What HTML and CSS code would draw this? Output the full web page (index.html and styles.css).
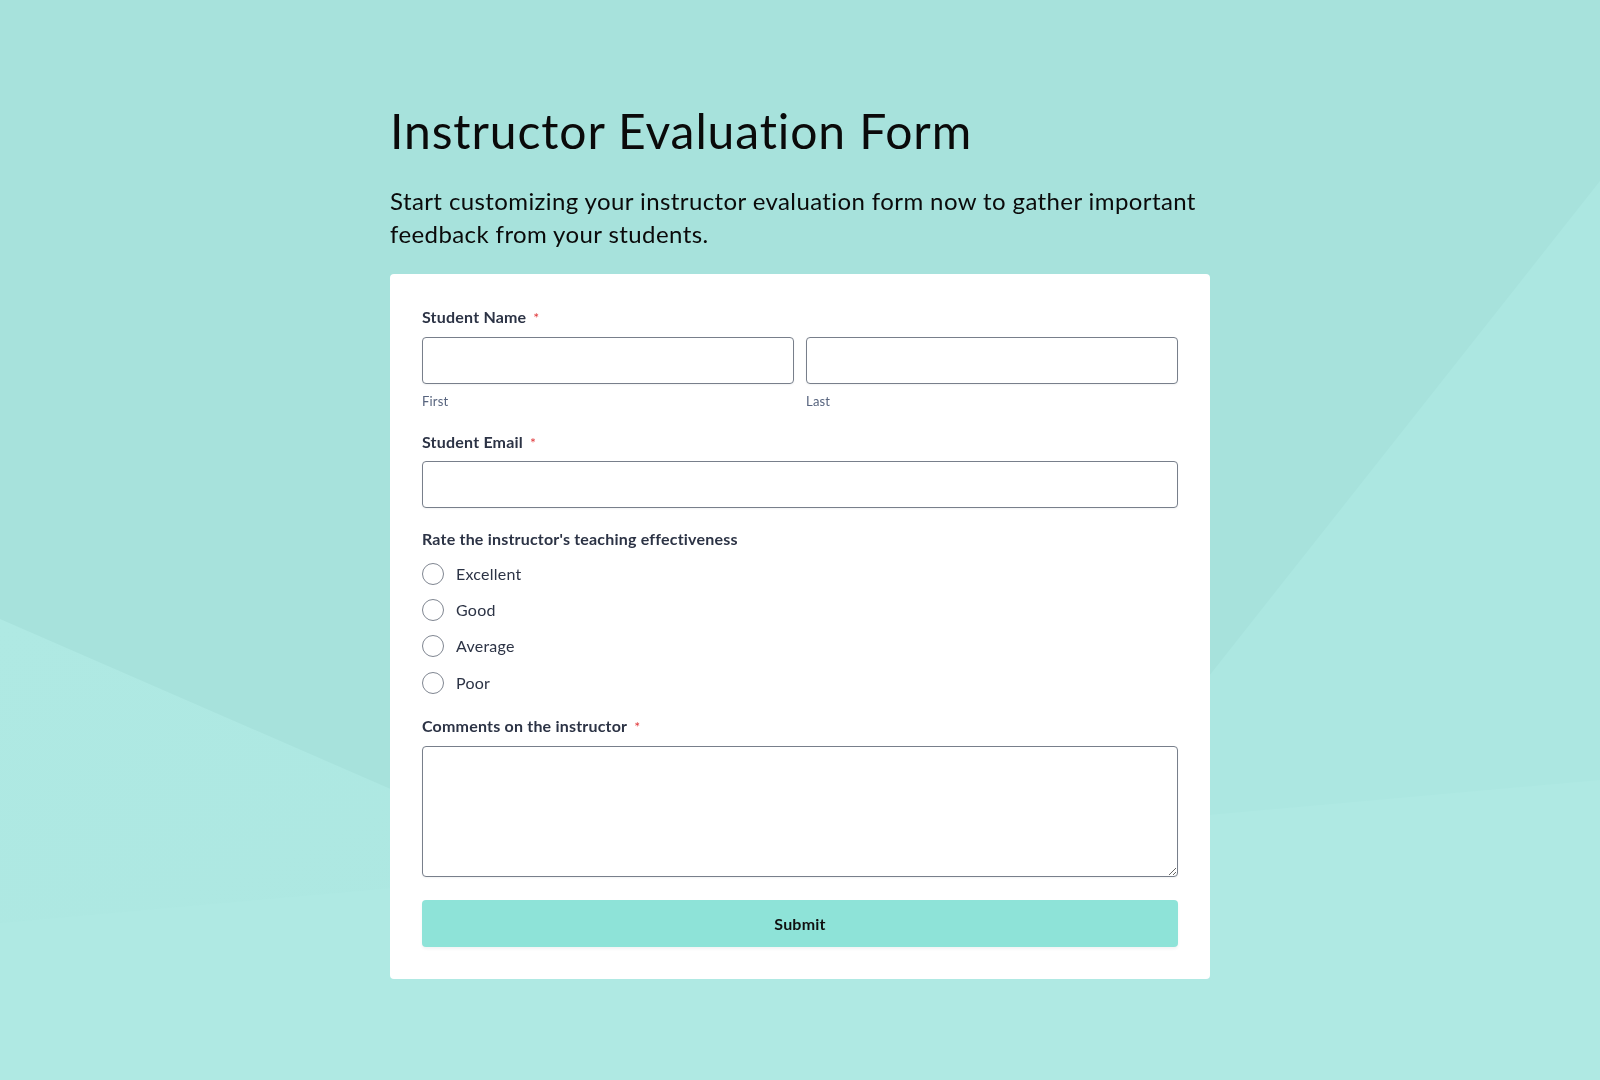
FILE: index.html
```html
<!DOCTYPE html>
<html lang="en">
<head>
<meta charset="utf-8">
<title>Instructor Evaluation Form</title>
<link rel="stylesheet" href="styles.css">
</head>
<body>
<div class="bg" aria-hidden="true">
  <svg class="bg-svg" viewBox="0 0 1600 1080" preserveAspectRatio="none" xmlns="http://www.w3.org/2000/svg">
    <defs>
      <linearGradient id="gl" x1="0" y1="0" x2="1" y2="1">
        <stop offset="0" stop-color="#afe9e3"/>
        <stop offset="1" stop-color="#abe6e0"/>
      </linearGradient>
    </defs>
    <rect x="0" y="0" width="1600" height="1080" fill="#a7e2dc"/>
    <polygon points="0,619 1220,1150 0,1150" fill="url(#gl)"/>
    <polygon points="1600,181 1600,1080 890,1080" fill="#ace7e1"/>
    <polygon points="0,923 1600,780 1600,1080 0,1080" fill="#afe9e3"/>
  </svg>
</div>

<main class="page">
  <h1 class="title">Instructor Evaluation Form</h1>
  <p class="subtitle">Start customizing your instructor evaluation form now to gather important feedback from your students.</p>

  <form class="card">
    <div class="field">
      <div class="label">Student Name<span class="req">*</span></div>
      <div class="name-row">
        <div class="name-col">
          <input class="input" type="text">
          <span class="sublabel">First</span>
        </div>
        <div class="name-col">
          <input class="input" type="text">
          <span class="sublabel">Last</span>
        </div>
      </div>
    </div>

    <div class="field field-email">
      <div class="label label-tight">Student Email<span class="req">*</span></div>
      <input class="input" type="email">
    </div>

    <div class="field field-rate">
      <div class="label label-radio">Rate the instructor's teaching effectiveness</div>
      <div class="radios">
        <label class="radio-row"><input class="radio" type="radio" name="rate"><span>Excellent</span></label>
        <label class="radio-row"><input class="radio" type="radio" name="rate"><span>Good</span></label>
        <label class="radio-row"><input class="radio" type="radio" name="rate"><span>Average</span></label>
        <label class="radio-row"><input class="radio" type="radio" name="rate"><span>Poor</span></label>
      </div>
    </div>

    <div class="field field-comments">
      <div class="label">Comments on the instructor<span class="req">*</span></div>
      <textarea class="textarea"></textarea>
    </div>

    <button class="submit" type="button">Submit</button>
  </form>
</main>
</body>
</html>
```

FILE: styles.css
```css
html, body {
  margin: 0;
  padding: 0;
}

body {
  font-family: Lato, "Noto Sans", sans-serif;
  background: #a7e2dc;
  color: #2c3345;
  min-height: 1080px;
}

.bg {
  position: fixed;
  inset: 0;
  z-index: -1;
}

.bg-svg {
  display: block;
  width: 100%;
  height: 100%;
}

.page {
  width: 820px;
  margin: 0 auto;
  padding-top: 102px;
  padding-bottom: 40px;
}

.title {
  margin: 0;
  font-size: 48px;
  font-weight: 400;
  line-height: 58px;
  letter-spacing: 0.9px;
  color: #0a0a0a;
}

.subtitle {
  margin: 25px 0 0;
  font-size: 24px;
  font-weight: 400;
  line-height: 32.5px;
  letter-spacing: 0.4px;
  color: #0a0a0a;
}

.card {
  margin-top: 24px;
  background: #ffffff;
  border-radius: 4px;
  padding: 33px 32px 32px;
  display: flex;
  flex-direction: column;
}

.field {
  display: flex;
  flex-direction: column;
}

.label {
  font-size: 16px;
  font-weight: 700;
  line-height: 20px;
  letter-spacing: 0.2px;
  color: #2c3345;
  margin-bottom: 9px;
}

.label-tight {
  margin-bottom: 8px;
}

.label-radio {
  margin-bottom: 7px;
}

.req {
  color: #e0393c;
  font-size: 14px;
  font-weight: 400;
  margin-left: 7px;
}

.name-row {
  display: flex;
  gap: 12px;
}

.name-col {
  flex: 1;
  display: flex;
  flex-direction: column;
}

.input {
  box-sizing: border-box;
  width: 100%;
  height: 47px;
  margin: 0;
  border: 1px solid #787f8b;
  border-radius: 4px;
  background: #fff;
  box-shadow: 0 1px 2px rgba(40, 50, 70, 0.06);
  font-family: inherit;
  font-size: 16px;
  padding: 0 12px;
}

.sublabel {
  margin-top: 9px;
  font-size: 13px;
  line-height: 16px;
  letter-spacing: 0.2px;
  color: #57647e;
}

.field-email {
  margin-top: 23px;
}

.field-rate {
  margin-top: 21px;
}

.radios {
  display: flex;
  flex-direction: column;
}

.radio-row {
  display: flex;
  align-items: center;
  height: 36.2px;
  font-size: 16px;
  line-height: 20px;
  letter-spacing: 0.25px;
  color: #2c3345;
}

.radio {
  appearance: none;
  -webkit-appearance: none;
  box-sizing: border-box;
  width: 22px;
  height: 22px;
  margin: 0 12px 0 0;
  border: 1.5px solid #7f8691;
  border-radius: 50%;
  background: #fff;
  flex: none;
}

.field-comments {
  margin-top: 15px;
}

.textarea {
  box-sizing: border-box;
  display: block;
  width: 100%;
  height: 131px;
  margin: 0;
  border: 1px solid #787f8b;
  border-radius: 4px;
  background: #fff;
  box-shadow: 0 1px 2px rgba(40, 50, 70, 0.06);
  font-family: inherit;
  font-size: 16px;
  padding: 10px 12px;
  resize: both;
}

.submit {
  margin-top: 23px;
  height: 47px;
  width: 100%;
  border: none;
  border-radius: 4px;
  background: #8ee3d8;
  box-shadow: 0 2px 3px rgba(40, 50, 70, 0.06);
  font-family: inherit;
  font-size: 16px;
  font-weight: 700;
  letter-spacing: 0.2px;
  color: #111111;
  cursor: pointer;
}
```
